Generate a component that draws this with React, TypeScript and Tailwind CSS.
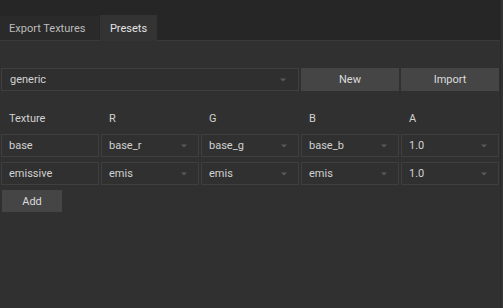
import { FC } from "react";

const Arrow: FC = () => (
  <svg width="6" height="4" viewBox="0 0 6 4" className="shrink-0">
    <path d="M0 0.5 H6 L3 3.5 Z" fill="#5a5a5a" />
  </svg>
);

const Cell: FC<{ text: string; combo?: boolean }> = ({ text, combo }) => (
  <div className="h-[23px] border border-[#3f3f3f] bg-[#303030] flex items-center justify-between pl-[7px] pr-[11px] text-[#d2d2d2]">
    <span>{text}</span>
    {combo && <Arrow />}
  </div>
);

const rows = [
  ["base", "base_r", "base_g", "base_b", "1.0"],
  ["emissive", "emis", "emis", "emis", "1.0"],
];

const App: FC = () => {
  return (
    <div
      className="w-[503px] h-[308px] flex bg-[#323232] text-[11px] leading-none overflow-hidden"
      style={{ fontFamily: "Roboto, 'Noto Sans', sans-serif" }}
    >
      <div className="w-[501px] h-full flex flex-col border-r border-[#2a2a2a]">
        <div className="h-[41px] bg-[#262626] flex items-end border-b border-[#3a3a3a] shrink-0">
          <div className="w-[99px] h-[25px] bg-[#2a2a2a] flex items-center pl-[9px] text-[#bcbcbc] mb-[-1px] border-b border-[#3a3a3a]">
            Export Textures
          </div>
          <div className="w-[57px] h-[26px] bg-[#333333] flex items-center justify-center ml-[1px] text-[#e2e2e2] mb-[-1px]">
            Presets
          </div>
        </div>
        <div className="flex-1 bg-[#303030] pt-[27px] pl-[1px] pr-[1px]">
          <div className="grid grid-cols-5 gap-x-[2px]">
            <div className="col-span-3 h-[23px] border border-[#3f3f3f] bg-[#2f2f2f] flex items-center justify-between pl-[8px] pr-[12px] text-[#d2d2d2]">
              <span>generic</span>
              <Arrow />
            </div>
            <button className="h-[23px] bg-[#454545] text-[#dcdcdc]">New</button>
            <button className="h-[23px] bg-[#454545] text-[#dcdcdc]">Import</button>
          </div>
          <div className="grid grid-cols-5 gap-x-[2px] mt-[17px] h-[20px] items-center text-[#d2d2d2]">
            {["Texture", "R", "G", "B", "A"].map((h) => (
              <div key={h} className="pl-[8px]">
                {h}
              </div>
            ))}
          </div>
          <div className="flex flex-col gap-[5px] mt-[6px]">
            {rows.map((r, i) => (
              <div key={i} className="grid grid-cols-5 gap-x-[2px]">
                {r.map((c, j) => (
                  <Cell key={j} text={c} combo={j > 0} />
                ))}
              </div>
            ))}
          </div>
          <button className="mt-[5px] ml-[1px] w-[60px] h-[22px] bg-[#454545] text-[#dcdcdc]">Add</button>
        </div>
      </div>
      <div className="flex-1 bg-[#333333]" />
    </div>
  );
};

export default App;
